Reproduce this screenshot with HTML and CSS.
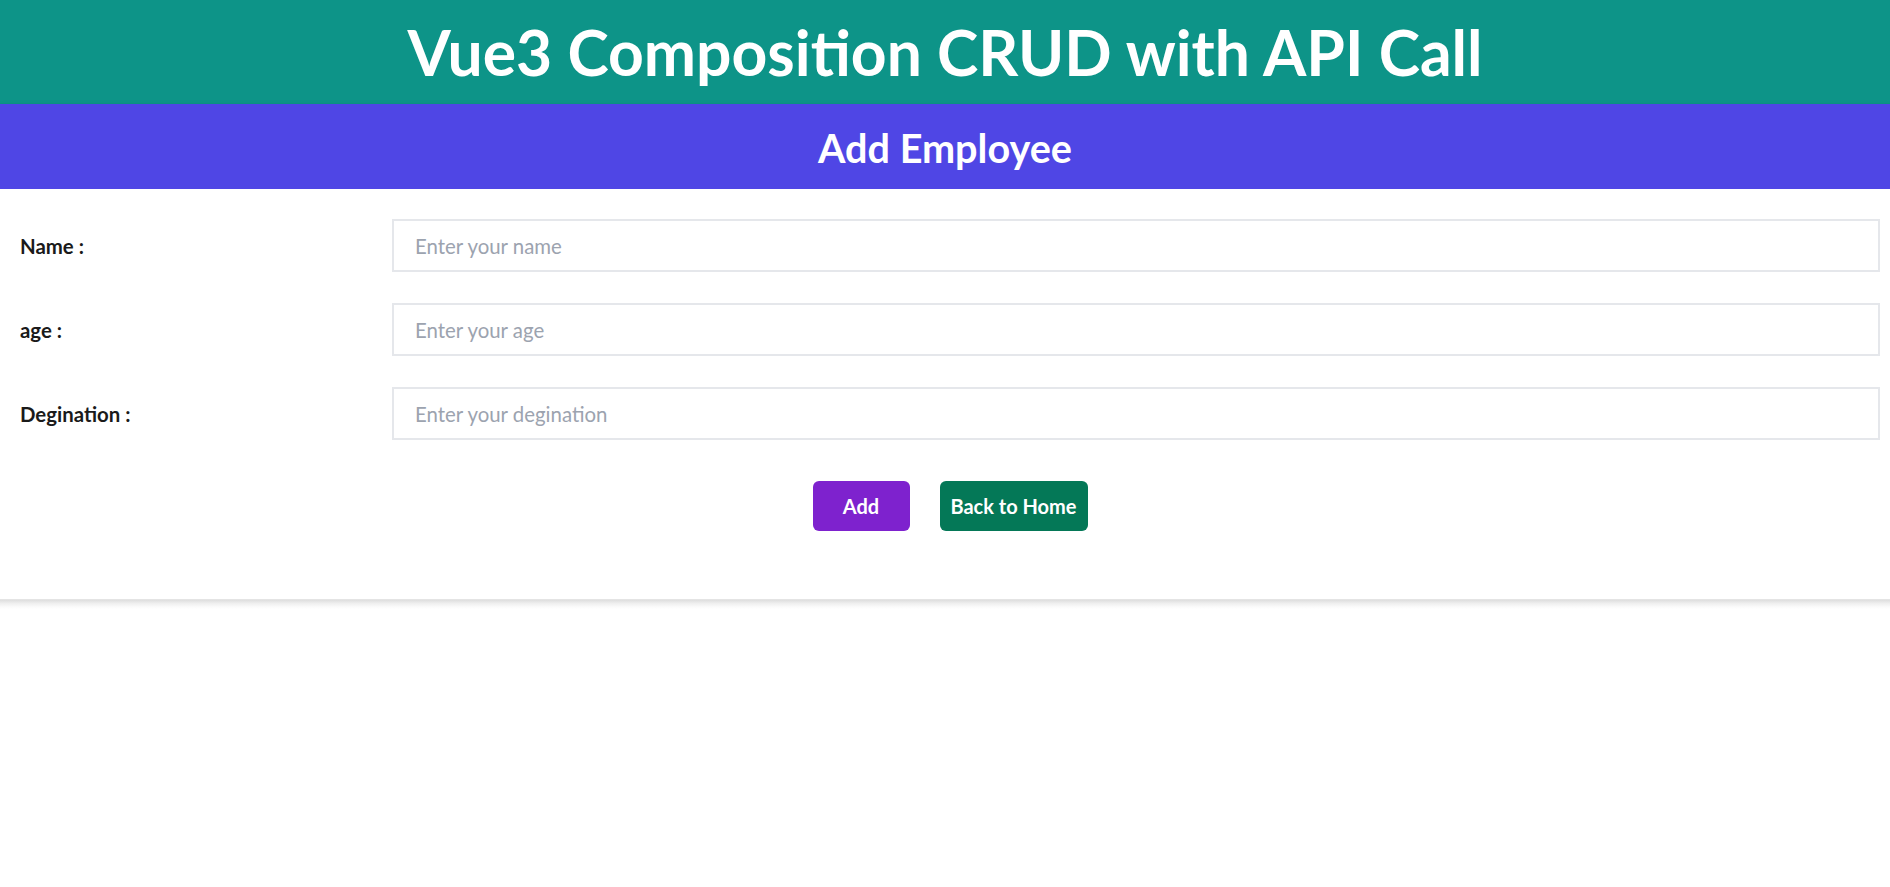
FILE: index.html
```html
<!DOCTYPE html>
<html lang="en">
<head>
<meta charset="utf-8">
<title>Vue3 Composition CRUD with API Call</title>
<link rel="stylesheet" href="styles.css">
</head>
<body>
<h1 class="site-title">Vue3 Composition CRUD with API Call</h1>
<section class="card">
  <h2 class="card-title">Add Employee</h2>
  <form class="form">
    <div class="row">
      <label class="label" for="name">Name :</label>
      <input class="input" id="name" type="text" placeholder="Enter your name">
    </div>
    <div class="row">
      <label class="label" for="age">age :</label>
      <input class="input" id="age" type="text" placeholder="Enter your age">
    </div>
    <div class="row">
      <label class="label" for="deg">Degination :</label>
      <input class="input" id="deg" type="text" placeholder="Enter your degination">
    </div>
    <div class="actions">
      <button type="button" class="btn btn-add">Add</button>
      <button type="button" class="btn btn-back">Back to Home</button>
    </div>
  </form>
</section>
<div class="card-shadow"></div>
</body>
</html>
```
FILE: styles.css
```css
* { box-sizing: border-box; }
body {
  margin: 0;
  font-family: Lato, "Noto Sans", "Liberation Sans", sans-serif;
  background: #fff;
  color: #111;
}
.site-title {
  margin: 0;
  height: 104px;
  line-height: 104px;
  background: #0d9488;
  color: #fff;
  text-align: center;
  font-size: 62.4px;
  font-weight: 700;
}
.card {
  height: 496px;
  background: #fff;
  border-bottom: 1px solid #e4e4e4;
  box-shadow: 0 2px 3px rgba(0,0,0,0.18), 0 5px 10px rgba(0,0,0,0.10);
}
.card-shadow {
  height: 9px;
  background-color: #f2f2f2;
  background-image: linear-gradient(to bottom, #dedede, #f0f0f0 40%, #fafafa 75%, #ffffff);
}
.card-title {
  margin: 0;
  height: 85px;
  line-height: 88px;
  background: #4f46e5;
  color: #fff;
  text-align: center;
  font-size: 39.6px;
  font-weight: 700;
}
.form {
  padding: 30px 10px 0 20px;
  display: flex;
  flex-direction: column;
  gap: 31px;
}
.row {
  display: grid;
  grid-template-columns: 1fr 4fr;
  align-items: center;
}
.label {
  font-size: 20.4px;
  font-weight: 700;
  color: #1a1a1a;
}
.input {
  height: 53px;
  border: 2px solid #e5e7eb;
  border-radius: 0;
  padding: 0 21px;
  font-family: inherit;
  font-size: 20.4px;
  color: #111;
  outline: none;
}
.input::placeholder { color: #9ca3af; }
.actions {
  margin-top: 10px;
  display: flex;
  justify-content: center;
  gap: 30px;
}
.btn {
  height: 50px;
  border: 0;
  border-radius: 6px;
  color: #fff;
  font-family: inherit;
  font-size: 20px;
  font-weight: 700;
}
.btn-add { background: #7e22ce; width: 97px; }
.btn-back { background: #047857; width: 148px; }
```
